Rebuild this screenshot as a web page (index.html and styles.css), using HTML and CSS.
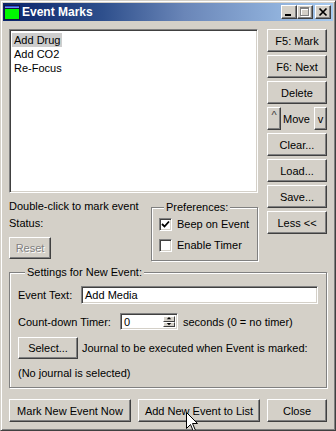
FILE: index.html
```html
<!DOCTYPE html>
<html>
<head>
<meta charset="utf-8">
<title>Event Marks</title>
<link rel="stylesheet" href="styles.css">
</head>
<body>
<div class="window">
  <div class="titlebar">
    <span class="app-icon"></span>
    <span class="title">Event Marks</span>
    <span class="title-btns">
      <span class="tbtn"><svg width="14" height="12" viewBox="0 0 14 12"><rect x="3" y="8" width="6" height="2" fill="#000"/></svg></span>
      <span class="tbtn"><svg width="14" height="12" viewBox="0 0 14 12"><g fill="none" stroke="#fff"><rect x="3.5" y="2.5" width="8" height="8"/><line x1="3" y1="3.5" x2="12" y2="3.5"/></g><g fill="none" stroke="#808080"><rect x="2.5" y="1.5" width="8" height="8"/><line x1="2" y1="2.5" x2="11" y2="2.5"/></g></svg></span>
      <span class="tbtn close"><svg width="14" height="12" viewBox="0 0 14 12"><path d="M3.5 2.5 L10.5 9.5 M10.5 2.5 L3.5 9.5" stroke="#000" stroke-width="1.7" fill="none"/></svg></span>
    </span>
  </div>
  <div class="client">
    <div class="top">
      <div class="left">
        <ul class="list">
          <li class="sel">Add Drug</li>
          <li>Add CO2</li>
          <li>Re-Focus</li>
        </ul>
        <div class="below">
          <div class="status-col">
            <div class="hint">Double-click to mark event</div>
            <div class="status">Status:</div>
            <button class="btn reset" disabled>Reset</button>
          </div>
          <fieldset class="group prefs">
            <legend>Preferences:</legend>
            <label class="check"><span class="box"><svg width="9" height="9" viewBox="0 0 9 9"><path d="M1 4 L3.5 6.5 L8 1.5" stroke="#000" stroke-width="1.8" fill="none"/></svg></span>Beep on Event</label>
            <label class="check row2"><span class="box"></span>Enable Timer</label>
          </fieldset>
        </div>
      </div>
      <div class="side">
        <button class="btn">F5: Mark</button>
        <button class="btn">F6: Next</button>
        <button class="btn">Delete</button>
        <div class="move">
          <button class="btn mini up">^</button>
          <span class="move-label">Move</span>
          <button class="btn mini down">v</button>
        </div>
        <button class="btn">Clear...</button>
        <button class="btn">Load...</button>
        <button class="btn">Save...</button>
        <button class="btn">Less &lt;&lt;</button>
      </div>
    </div>
    <fieldset class="group settings">
      <legend>Settings for New Event:</legend>
      <div class="row">
        <span class="lbl lbl-event">Event Text:</span>
        <span class="field text-field">Add Media</span>
      </div>
      <div class="row row-timer">
        <span class="lbl lbl-timer">Count-down Timer:</span>
        <span class="field spin">
          <span class="spin-val">0</span>
          <span class="spin-btns">
            <span class="sbtn"><svg width="8" height="4" viewBox="0 0 8 4"><path d="M1 3 L4 0 L7 3 Z" fill="#000"/></svg></span>
            <span class="sbtn"><svg width="8" height="4" viewBox="0 0 8 4"><path d="M1 0 L4 3 L7 0 Z" fill="#000"/></svg></span>
          </span>
        </span>
        <span class="secs">seconds (0 = no timer)</span>
      </div>
      <div class="row row-select">
        <button class="btn select">Select...</button>
        <span class="journal">Journal to be executed when Event is marked:</span>
      </div>
      <div class="nojournal">(No journal is selected)</div>
    </fieldset>
    <div class="bottom">
      <button class="btn wide">Mark New Event Now</button>
      <button class="btn wide">Add New Event to List</button>
      <button class="btn close-btn">Close</button>
    </div>
  </div>
  <svg class="cursor" width="13" height="21" viewBox="0 0 13 21"><path d="M0.5 0.5 L0.5 16.5 L4.5 12.5 L7.5 19.5 L9.5 18.5 L6.5 11.5 L11.5 11.5 Z" fill="#fff" stroke="#000" stroke-width="1"/></svg>
</div>
</body>
</html>
```

FILE: styles.css
```css
* {
  box-sizing: border-box;
}

body {
  margin: 0;
  font-family: "Liberation Sans", Arial, sans-serif;
  font-size: 11px;
  color: #000;
  background: #d4d0c8;
}

.window {
  position: relative;
  width: 336px;
  height: 431px;
  background: #d4d0c8;
  border: 1px solid;
  border-color: #d4d0c8 #404040 #404040 #d4d0c8;
  box-shadow: inset 1px 1px #fff, inset -1px -1px #808080;
  padding: 2px;
  overflow: hidden;
}

.titlebar {
  height: 18px;
  display: flex;
  align-items: center;
  padding-left: 1px;
  background: linear-gradient(to right, #0a246a 0%, #2e4f8c 30%, #6a86b8 55%, #a6caf0 100%);
}

.app-icon {
  width: 16px;
  height: 15px;
  border: 1px solid #141446;
  background: linear-gradient(#2f4fd0 0, #2f4fd0 1px, #6f8ff0 1px, #6f8ff0 2px, #141446 2px, #141446 3px, #00f800 3px);
}

.title {
  margin-left: 2px;
  color: #fff;
  font-weight: bold;
  font-size: 12px;
  line-height: 18px;
}

.title-btns {
  margin-left: auto;
  margin-right: 2px;
  display: flex;
}

.tbtn {
  display: block;
  width: 16px;
  height: 14px;
  background: #d4d0c8;
  border: 1px solid;
  border-color: #fff #404040 #404040 #fff;
  box-shadow: inset -1px -1px #808080;
}

.tbtn svg {
  display: block;
}

.tbtn.close {
  margin-left: 2px;
}

.client {
  padding: 8px 6px 0 6px;
}

.top {
  display: flex;
  gap: 9px;
}

.left {
  width: 249px;
}

.list {
  height: 164px;
  margin: 0;
  padding: 3px 2px;
  list-style: none;
  background: #fff;
  border: 1px solid;
  border-color: #808080 #fff #fff #808080;
  box-shadow: inset 1px 1px #404040, inset -1px -1px #d4d0c8;
}

.list li {
  width: fit-content;
  padding: 0 2px;
  line-height: 14px;
}

.list li.sel {
  background: #cdcdcd;
}

.below {
  display: flex;
}

.status-col {
  flex: 1;
}

.hint {
  margin-top: 7px;
  line-height: 13px;
}

.status {
  margin-top: 4px;
  line-height: 13px;
}

.btn {
  display: block;
  height: 23px;
  padding: 0;
  font: inherit;
  color: #000;
  background: #d4d0c8;
  border: 1px solid;
  border-color: #fff #404040 #404040 #fff;
  box-shadow: inset -1px -1px #808080;
  text-align: center;
}

.btn.reset {
  margin-top: 7px;
  width: 42px;
  height: 22px;
  color: #808080;
  text-shadow: 1px 1px #fff;
}

.group {
  margin: 0;
  padding: 0;
  min-width: 0;
  border: 1px solid #808080;
  box-shadow: inset 1px 1px #fff, 1px 1px #fff;
}

.group legend {
  padding: 0 2px;
  line-height: 13px;
  background: #d4d0c8;
}

.prefs {
  width: 107px;
  margin-top: 8px;
  padding: 4px 0 8px 7px;
}

.prefs legend {
  margin-left: 5px;
}

.check {
  display: flex;
  align-items: center;
  gap: 5px;
  height: 13px;
  line-height: 13px;
}

.check.row2 {
  margin-top: 8px;
}

.box {
  width: 13px;
  height: 13px;
  padding: 1px;
  background: #fff;
  border: 1px solid;
  border-color: #808080 #fff #fff #808080;
  box-shadow: inset 1px 1px #404040, inset -1px -1px #d4d0c8;
}

.box svg {
  display: block;
}

.side {
  width: 60px;
  display: flex;
  flex-direction: column;
  gap: 3px;
}

.side > .btn {
  width: 60px;
}

.move {
  display: flex;
  align-items: center;
  height: 23px;
}

.btn.mini {
  height: 23px;
}

.btn.up {
  width: 14px;
  line-height: 13px;
  padding-bottom: 6px;
  color: #404040;
}

.btn.down {
  width: 13px;
  margin-left: auto;
}

.move-label {
  margin-left: 2px;
}

.settings {
  margin-top: 5px;
  padding: 7px 8px 7px 8px;
}

.settings legend {
  margin-left: 7px;
}

.row {
  display: flex;
  align-items: center;
}

.lbl-event {
  width: 63px;
}

.lbl-timer {
  width: 102px;
}

.field {
  background: #fff;
  border: 1px solid;
  border-color: #808080 #fff #fff #808080;
  box-shadow: inset 1px 1px #404040, inset -1px -1px #d4d0c8;
}

.text-field {
  flex: 1;
  height: 18px;
  padding-left: 3px;
  line-height: 16px;
}

.row-timer {
  margin-top: 9px;
}

.spin {
  display: flex;
  width: 58px;
  height: 17px;
  padding: 2px 2px 2px 3px;
}

.spin-val {
  flex: 1;
  line-height: 13px;
}

.spin-btns {
  display: flex;
  flex-direction: column;
  width: 12px;
}

.sbtn {
  display: flex;
  align-items: center;
  justify-content: center;
  height: 6.5px;
  background: #d4d0c8;
  border: 1px solid;
  border-color: #fff #404040 #404040 #fff;
}

.sbtn svg {
  display: block;
  width: 6px;
  height: 3px;
}

.secs {
  margin-left: 5px;
}

.row-select {
  margin-top: 7px;
}

.btn.select {
  width: 60px;
  height: 22px;
}

.journal {
  margin-left: 4px;
}

.nojournal {
  margin-top: 8px;
  line-height: 13px;
}

.bottom {
  display: flex;
  gap: 7px;
  margin-top: 11px;
}

.btn.wide {
  width: 122px;
}

.btn.close-btn {
  width: 60px;
}

.cursor {
  position: absolute;
  left: 185px;
  top: 411px;
}
```
